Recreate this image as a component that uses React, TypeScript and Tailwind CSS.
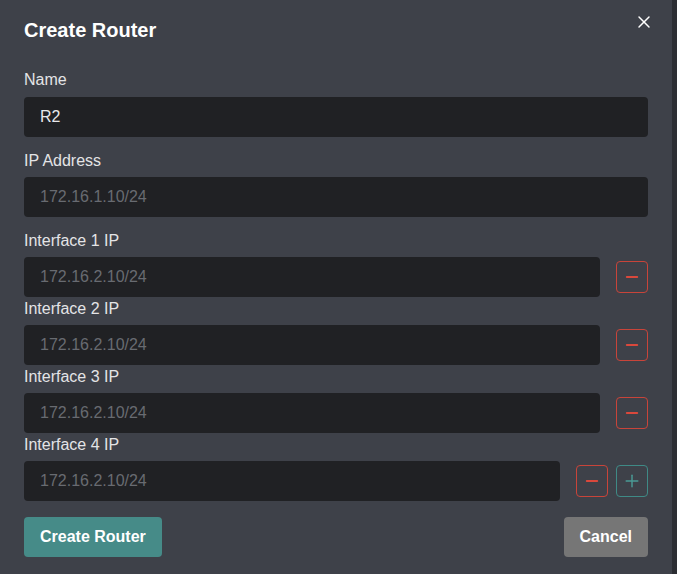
import { X, Minus, Plus } from "lucide-react";

const interfaces = ["Interface 1 IP", "Interface 2 IP", "Interface 3 IP", "Interface 4 IP"];

export default function App() {
  return (
    <div className="h-[574px] w-[677px] overflow-hidden bg-[#2c2e33] font-['Liberation_Sans',Arial,sans-serif]">
      <div className="relative h-full w-[672px] bg-[#3e4149] px-6 pt-4">
        {/* Close */}
        <button className="absolute right-[18px] top-[12px] text-white">
          <X size={20} strokeWidth={1.75} />
        </button>

        <h2 className="mb-6 text-[20px] font-bold leading-7 text-white">Create Router</h2>

        {/* Name */}
        <label className="mb-[5px] block text-base leading-6 text-[#e4e4e6]">Name</label>
        <input
          className="mb-3 block h-10 w-full rounded bg-[#202124] px-4 text-base text-[#e8e8ea] outline-none"
          defaultValue="R2"
        />

        {/* IP Address */}
        <label className="mb-1 block text-base leading-6 text-[#e4e4e6]">IP Address</label>
        <input
          className="mb-3 block h-10 w-full rounded bg-[#202124] px-4 text-base text-[#e8e8ea] outline-none placeholder:text-[#686b71]"
          placeholder="172.16.1.10/24"
        />

        {/* Interfaces */}
        {interfaces.map((name, i) => {
          const last = i === interfaces.length - 1;
          return (
            <div key={name}>
              <label className="mb-1 block text-base leading-6 text-[#e4e4e6]">{name}</label>
              <div className="flex items-center gap-4">
                <input
                  className="block h-10 min-w-0 flex-1 rounded bg-[#202124] px-4 text-base text-[#e8e8ea] outline-none placeholder:text-[#686b71]"
                  placeholder="172.16.2.10/24"
                />
                <div className="flex gap-2">
                  <button className="flex h-8 w-8 items-center justify-center rounded border border-[#c8443a] text-[#d9483c]">
                    <Minus size={18} strokeWidth={2.5} />
                  </button>
                  {last && (
                    <button className="flex h-8 w-8 items-center justify-center rounded border border-[#3f8a86] text-[#4a9a95]">
                      <Plus size={20} strokeWidth={1.75} />
                    </button>
                  )}
                </div>
              </div>
            </div>
          );
        })}

        {/* Actions */}
        <div className="mt-4 flex items-center justify-between">
          <button className="h-10 rounded bg-[#468b88] px-4 text-base font-bold text-white">
            Create Router
          </button>
          <button className="h-10 rounded bg-[#767676] px-4 text-base font-bold text-white">
            Cancel
          </button>
        </div>
      </div>
    </div>
  );
}
